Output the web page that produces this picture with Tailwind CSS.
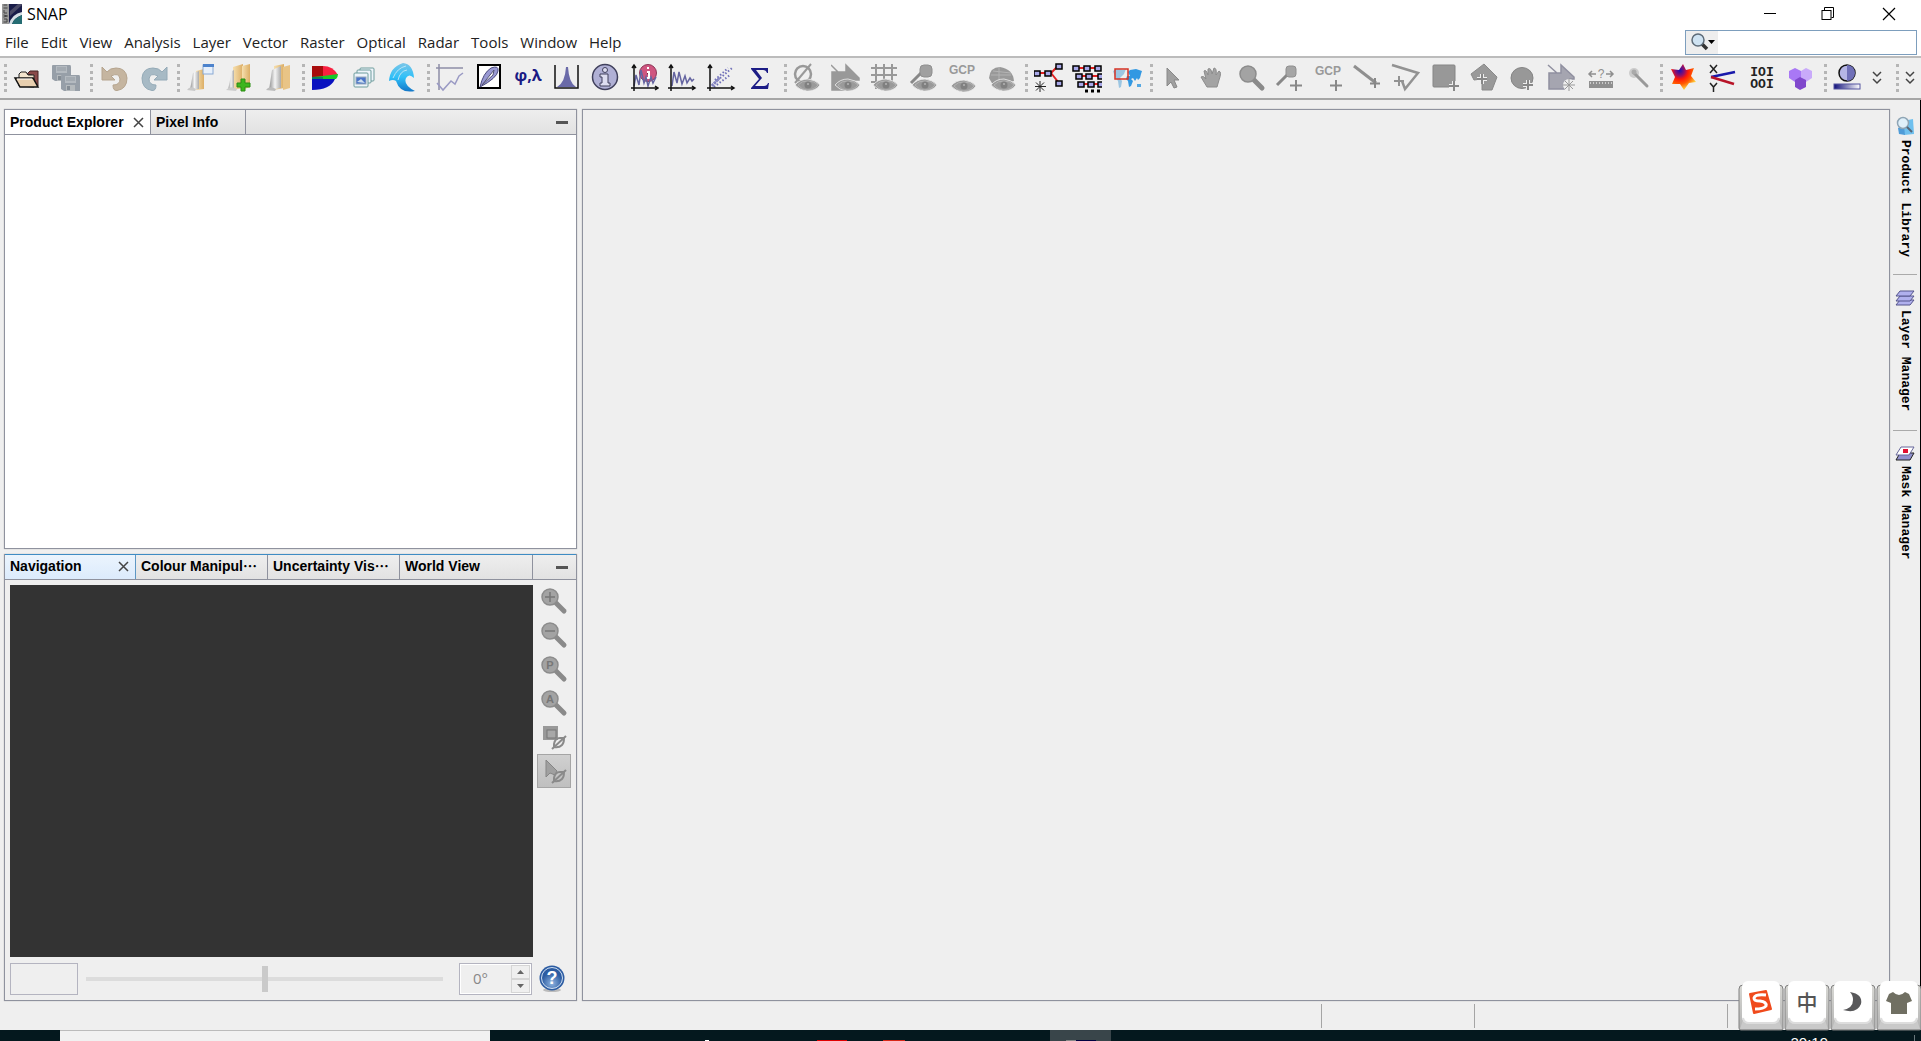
<!DOCTYPE html>
<html lang="en">
<head>
<meta charset="utf-8">
<title>SNAP</title>
<script src="https://cdn.jsdelivr.net/npm/@tailwindcss/browser@4"></script>
</head>
<body class="h-screen overflow-hidden flex flex-col bg-[#efefef] text-black font-['Open_Sans','Noto_Sans',sans-serif] text-[15px]">
<svg class="absolute w-0 h-0" aria-hidden="true">
  <defs>
    <linearGradient id="fold" x1="0" x2="1"><stop offset="0" stop-color="#f6dfae"/><stop offset="1" stop-color="#dcae66"/></linearGradient>
    <linearGradient id="paper" x1="0" x2="1"><stop offset="0" stop-color="#8f8f8f"/><stop offset=".5" stop-color="#f4f4f4"/><stop offset="1" stop-color="#aaa"/></linearGradient>
    <linearGradient id="wave" x1="0" y1="0" x2="0" y2="1"><stop offset="0" stop-color="#7cc6e8"/><stop offset=".5" stop-color="#2fc0f8"/><stop offset="1" stop-color="#1477c8"/></linearGradient>
    <radialGradient id="help" cy=".75"><stop offset="0" stop-color="#8fb4e0"/><stop offset="1" stop-color="#2c5ca2"/></radialGradient>
    <radialGradient id="hot" cx=".35" cy=".25" r=".75"><stop offset="0" stop-color="#1b10b0"/><stop offset=".25" stop-color="#8a1070"/><stop offset=".45" stop-color="#ff1a08"/><stop offset=".7" stop-color="#ff5a00"/><stop offset="1" stop-color="#ffd640"/></radialGradient>
    <linearGradient id="bluebar" x1="0" x2="1"><stop offset="0" stop-color="#10107a"/><stop offset="1" stop-color="#fff"/></linearGradient>
    <linearGradient id="keybody" x1="0" y1="0" x2="0" y2="1"><stop offset="0" stop-color="#d8d8d4"/><stop offset="1" stop-color="#b4b4b4"/></linearGradient>
    <g id="eye"><path d="M3 22Q8 16 16 16Q24 17 28 22Q24 28 15 28Q7 27 3 22Z" fill="#9a9a9a" stroke="#efefef" stroke-width=".8"/><path d="M6 22Q10 17.500 16 18Q23 18 26 22M6 22Q10 27 15 27Q22 27 26 22" fill="none" stroke="#b2b2b2" stroke-width="1"/><circle cx="16" cy="22" r="3.500" fill="#808080"/><circle cx="16" cy="21" r="1" fill="#b5b5b5"/></g>
    <g id="mag"><path d="M16 16L24 24" stroke="#8a8a8a" stroke-width="5" stroke-linecap="round"/><circle cx="10" cy="10" r="8" fill="#a3a3a3" stroke="#8c8c8c" stroke-width="1.500"/></g>
    <g id="key"><path d="M1 9Q1 5 5 5H41Q45 5 45 9V49Q45 50 43 50H3Q1 50 1 48Z" fill="url(#keybody)" stroke="#808080"/><path d="M5 40L2 49H44L41 40Z" fill="#c9c9c9"/><rect x="4" y="1" width="38" height="42" rx="6" fill="#fff"/><path d="M5 38Q6 43 11 43H35Q40 43 41 38" fill="none" stroke="#ddd" stroke-width="2"/></g>
    <g id="node"><rect x="1" y="1" width="6" height="5" fill="#a9a9ea" stroke="#000" stroke-width="1.500"/></g>
  </defs>
</svg>

<header class="bg-white flex flex-col shrink-0">
  <div class="h-7 flex items-center">
    <svg class="ml-0.5 mr-[5px]" width="20" height="20" viewBox="0 0 20 20"><rect width="20" height="20" fill="#191c48"/><rect width="7" height="20" fill="#9b9b9b"/><path d="M1.500 1H5M1.500 4H5.500M2 6V9H5M1.500 11L5.500 12L1.500 13M2 15H5V18H1.500" stroke="#444" fill="none"/><path d="M20 1L8 12V7L16 0H20Z" fill="#4a4a66"/><path d="M7 20Q10 10 20 8V11Q12 14 10 20Z" fill="#d6dfe4"/><path d="M10 20Q12 14 20 11V20Z" fill="#246c72"/></svg>
    <h1 class="text-base">SNAP</h1>
    <div class="ml-auto flex">
      <button class="w-[59px] h-6 grid place-items-center" aria-label="Minimize"><svg width="14" height="14"><path d="M1 6.500H13" stroke="#000"/></svg></button>
      <button class="w-[58px] h-6 grid place-items-center" aria-label="Restore"><svg width="14" height="14" fill="none" stroke="#000"><path d="M3.500 3.500V.5H12.500V10.500H10.500"/><rect x="1" y="3.500" width="9" height="9"/></svg></button>
      <button class="w-16 h-6 grid place-items-center" aria-label="Close"><svg width="14" height="14"><path d="M1 1L13 13M13 1L1 13" stroke="#000" stroke-width="1.200"/></svg></button>
    </div>
  </div>
  <div class="h-7 flex items-center">
    <nav class="flex items-center gap-3 pl-[5px] text-[#222] h-7" aria-label="Menu">
      <button>File</button><button>Edit</button><button>View</button><button>Analysis</button><button>Layer</button><button>Vector</button><button>Raster</button><button>Optical</button><button>Radar</button><button>Tools</button><button>Window</button><button>Help</button>
    </nav>
    <div class="ml-auto mr-1 w-[232px] h-[25px] border border-[#7d9ebd] flex">
      <button class="w-8 bg-[#eee] grid place-items-center" aria-label="Search options"><svg width="26" height="22"><path d="M13 13L18 18" stroke="#333" stroke-width="3.500"/><circle cx="9" cy="9" r="6" fill="#cfe3f2" stroke="#5d6b78" stroke-width="1.500"/><path d="M19 9H26L22.500 13Z"/></svg></button>
      <input type="text" aria-label="Search" class="flex-1 min-w-0 outline-none bg-white px-1">
    </div>
  </div>
</header>

<div role="toolbar" class="shrink-0 h-11 border-y-2 border-t-[#bcbcbc] border-b-[#a6a6a6] flex pl-1 overflow-hidden [&>div]:flex [&>div]:items-center [&>div]:shrink-0 [&_button]:flex-1 [&_button]:h-10 [&_button]:grid [&_button]:place-items-center [&_i]:w-1 [&_i]:h-7 [&_i]:border-l-3 [&_i]:border-dotted [&_i]:border-[#b5b5b5]">
  <div class="w-[86px] pr-[5px]"><i></i>
    <button aria-label="Open"><svg width="30" height="30"><path d="M15 11L18 8H26V23H20V12Z" fill="#8a4a4a" stroke="#422" /><path d="M7 23V11L9 9H14L16 12H22V24Z" fill="#f4e5ce" stroke="#222"/><path d="M3 15H21L26 24H8Z" fill="#e8cfaf" stroke="#111" stroke-width="1.500"/><path d="M5 16H20" stroke="#fff"/></svg></button>
    <button aria-label="Save all"><svg width="30" height="30"><g id="fl"><path d="M1 3Q1 2 2 2H19Q20 2 20 4V18H4L1 16Z" fill="#979fa8"/><rect x="5" y="3" width="11" height="7" fill="#b4bac0"/><path d="M6 5H15M6 7H15" stroke="#929aa2"/><rect x="6" y="12" width="9" height="6" fill="#b5babd"/><rect x="7" y="13" width="3" height="4" fill="#858d95"/></g><use href="#fl" x="9" y="10"/></svg></button>
  </div>
  <div class="w-[87px] pr-[5px]"><i></i>
    <button aria-label="Undo"><svg width="30" height="30"><path d="M3 4V17H16L12 13Q20 9 21 16Q21 22 14 22Q14 28 18 27.500Q28 26 28 15Q27 5 17 5Q11 5 8 9Z" fill="#c5b5a0" stroke="#b5a48e"/></svg></button>
    <button aria-label="Redo"><svg width="30" height="30"><path d="M29 4V17H16L20 13Q12 9 11 16Q11 22 18 22Q18 28 14 27.500Q4 26 4 15Q5 5 15 5Q21 5 24 9Z" fill="#a7bac5" stroke="#94aab7"/></svg></button>
  </div>
  <div class="w-[125px] pr-[5px]"><i></i>
    <button aria-label="Open session"><svg width="30" height="30"><path d="M11 8L19 6V26L11 27Z" fill="url(#fold)"/><path d="M5 27L8 10L14 8V26Z" fill="url(#paper)"/><path d="M2 27Q5 22 11 26L10 28Z" fill="#c9c9c9"/><rect x="18" y="2" width="10" height="9" fill="#e7f0fb" stroke="#8aaad4"/><rect x="18" y="1" width="11" height="3" fill="#4d83cc"/></svg></button>
    <button aria-label="Add session"><svg width="30" height="30"><path d="M9 4L19 1V25L9 27Z" fill="url(#fold)"/><path d="M18 3L26 1V24L18 27Z" fill="url(#fold)"/><path d="M4 27L8 8L10 7V26Z" fill="url(#paper)"/><path d="M2 27Q6 22 13 26L12 28Z" fill="#ccc"/><path d="M17 16H21V20H26V24H21V28H17V24H13V20H17Z" fill="#3db51e" stroke="#2b8d12"/></svg></button>
    <button aria-label="Close session"><svg width="30" height="30"><path d="M11 3L21 1V25L11 27Z" fill="url(#fold)"/><path d="M20 4L27 2V25L20 27Z" fill="#e9c486"/><path d="M6 27L9 7L18 3V25Z" fill="url(#paper)"/><path d="M3 27Q6 22 13 26L12 28Z" fill="#bbb"/></svg></button>
  </div>
  <div class="w-[125px] pr-[5px]"><i></i>
    <button aria-label="RGB image"><svg width="30" height="30"><path d="M2 3H13V14H2Z" fill="#a80c0c"/><path d="M13 3Q23 3 28 12L13 14Z" fill="#f82040"/><path d="M2 14L13 13L28 11Q28 14 26 16H2Z" fill="#19c828"/><path d="M2 14H13V16H2Z" fill="#0a8060"/><path d="M2 16H25Q20 27 2 27Z" fill="#0a12c0"/></svg></button>
    <button aria-label="Image windows"><svg width="30" height="30" fill="#eef4fa" stroke="#6d9c9c"><rect x="11" y="5" width="14" height="13" rx="1"/><rect x="8" y="7" width="14" height="13" rx="1"/><rect x="5" y="10" width="14" height="14" rx="1"/><rect x="7" y="14" width="10" height="7" fill="#4a74c8" stroke="#9ab"/><path d="M8 19L12 16L16 20" fill="#cde" stroke="none"/></svg></button>
    <button aria-label="Wave"><svg width="30" height="30"><path d="M1 18Q2 4 15 0Q25 1 26 15Q21 10 18 15Q15 22 27 28Q12 31 8 18Q5 16 1 18Z" fill="url(#wave)"/><path d="M5 15Q9 5 18 3M10 17Q12 8 19 7" fill="none" stroke="#b8e4f6"/></svg></button>
  </div>
  <div class="w-[357px] pr-[5px]"><i></i>
    <button aria-label="Profile plot"><svg width="30" height="30" fill="none" stroke="#9a9ac4" stroke-width="1.500"><path d="M4 1V27M1 5H28" stroke="#8f8fa8"/><path d="M2 20L8 27L16 18L20 21L24 13L28 10"/></svg></button>
    <button aria-label="Edit mask"><svg width="30" height="30"><rect x="4" y="2" width="22" height="23" fill="#fff" stroke="#000" stroke-width="2"/><path d="M6 24Q9 10 17 5Q25 2 24 8Q23 15 6 24Z" fill="#9999d3" stroke="#4a4a7c"/><path d="M8 22L20 7L19 12Z" fill="#fff" stroke="#557"/></svg></button>
    <button aria-label="Geo-coding"><svg width="30" height="30"><text x="15" y="18" text-anchor="middle" font-family="Open Sans" font-size="16" font-weight="700" fill="#1a1a84">φ,λ</text></svg></button>
    <button aria-label="Histogram"><svg width="30" height="30"><path d="M6 24Q14 20 15 4H17Q18 20 25 24Z" fill="#6a6aa8"/><path d="M4 2V25H27V2" fill="none" stroke="#111" stroke-width="1.500"/></svg></button>
    <button aria-label="Information"><svg width="30" height="30"><circle cx="15" cy="14" r="12.500" fill="#b0b0d5" stroke="#40405c" stroke-width="1.500"/><path d="M12 11H18V20H20V23H10V20H12V14H10V11Z" fill="#ddddf0" stroke="#40405c"/><circle cx="15" cy="7" r="2.500" fill="#ddddf0" stroke="#40405c"/></svg></button>
    <button aria-label="Statistics"><svg width="30" height="30"><circle cx="19" cy="10" r="8.500" fill="#cf5580" stroke="#8d3656"/><path d="M18 9H20V15M17 15H22M18 5H20" stroke="#fff" stroke-width="2"/><path d="M5 23L7 12L10 22L12 7L15 20L17 14L19 23L22 14L24 20L27 14" fill="none" stroke="#6464a0" stroke-width="1.500"/><path d="M5 28V3M2 25H28M3 5L5 2L7 5M26 23L29 25L26 27" fill="none" stroke="#111" stroke-width="1.500"/></svg></button>
    <button aria-label="Spectrum"><svg width="30" height="30" fill="none"><path d="M5 23L7 9L10 20L12 9L15 21L18 13L20 20L23 15L25 18L27 16" stroke="#6464a0" stroke-width="1.500"/><path d="M4 28V3M1 25H27M2 5L4 2L6 5M25 23L28 25L25 27" stroke="#111" stroke-width="1.500"/></svg></button>
    <button aria-label="Scatter plot"><svg width="30" height="30" fill="none"><path d="M6 22L26 5M8 24L24 12M9 17L22 5" stroke="#7070b8" stroke-width="2" stroke-dasharray="1.500 2"/><path d="M6 23L14 14" stroke="#8686c2" stroke-width="3" stroke-dasharray="2 1"/><path d="M4 28V3M1 25H27M2 5L4 2L6 5M25 23L28 25L25 27" stroke="#111" stroke-width="1.500"/></svg></button>
    <button aria-label="Sum"><svg width="30" height="30"><path d="M6 5H23V10H22Q21 7 18 7H11L17 15L10 23H19Q22 23 23 20H24L23 26H6V25L14 16L6 6Z" fill="#1c1c86"/></svg></button>
  </div>
  <div class="w-[241px] pr-1"><i></i>
    <button aria-label="No-data overlay"><svg width="30" height="30"><path d="M3 20L19 1" stroke="#999" stroke-width="2"/><circle cx="11" cy="11" r="8" fill="none" stroke="#999" stroke-width="2.500"/><use href="#eye"/></svg></button>
    <button aria-label="Shape overlay"><svg width="30" height="30"><path d="M0 2L7 9M1 9H15V2L28 15V17H20L14 27H1Z" fill="#999" stroke="#999" stroke-width="1.500"/><use href="#eye" x="1"/></svg></button>
    <button aria-label="Graticule overlay"><svg width="30" height="30"><path d="M6 1V26M14 1V18M22 1V18M1 5H27M1 12H27M1 19H12" stroke="#999" stroke-width="2"/><use href="#eye"/></svg></button>
    <button aria-label="Pin overlay"><svg width="30" height="30"><path d="M2 20L13 9" stroke="#888" stroke-width="3"/><rect x="11" y="2" width="12" height="12" rx="4" fill="#a0a0a0" stroke="#8f8f8f"/><use href="#eye"/></svg></button>
    <button aria-label="GCP overlay"><svg width="30" height="30"><text x="14" y="11" text-anchor="middle" font-family="Liberation Sans" font-size="12" font-weight="700" fill="#999">GCP</text><use href="#eye" y="1"/></svg></button>
    <button aria-label="World overlay"><svg width="30" height="30"><path d="M2 15Q3 4 13 4Q26 6 27 18L6 22Z" fill="#999"/><path d="M4 12H24M12 4V18M6 8L24 10" stroke="#b3b3b3"/><use href="#eye" x="1"/></svg></button>
  </div>
  <div class="w-[125px] pr-1"><i></i>
    <button aria-label="Graph builder"><svg width="30" height="30"><path d="M4 10H17L24 3M17 10L25 20" stroke="#e02020" stroke-width="2" fill="none"/><use href="#node" x="-1" y="7"/><use href="#node" x="10" y="7"/><use href="#node" x="21"/><use href="#node" x="21" y="17"/><path d="M6 18V29M1 23.500H12M2 19.500L10 27.500M10 19.500L2 27.500" stroke="#222"/></svg></button>
    <button aria-label="Batch processing"><svg width="32" height="30"><path d="M3 5H29M8 13H30M9 21H30" stroke="#e02020" stroke-width="2"/><use href="#node" x="0" y="2"/><use href="#node" x="11" y="2"/><use href="#node" x="22" y="2"/><use href="#node" x="3" y="10"/><use href="#node" x="13" y="10"/><path d="M30 11H26V16H30M30 19H26V24H30" stroke="#000" stroke-width="1.500" fill="#a9a9ea"/><use href="#node" x="5" y="18"/><use href="#node" x="15" y="18"/><path d="M13 28H29" stroke="#000" stroke-width="3" stroke-dasharray="3 3"/></svg></button>
    <button aria-label="World map"><svg width="32" height="30"><path d="M2 8Q5 5 12 7L15 6L13 11L9 15L11 18L10 24L8 25L7 18L4 14Z" fill="#9cc6e2"/><path d="M17 9L19 7L25 6L31 8L30 11L29 15L27 17L26 15L24 18L22 15L20 16L22 18L20 23L18 24L17 18L15 16L16 13L19 13Z" fill="#3298e2"/><path d="M26 21L30 21L30 24L26 24Z" fill="#55a8e2"/><rect x="4" y="6" width="13" height="10" fill="none" stroke="#d63324" stroke-width="1.500"/></svg></button>
  </div>
  <div class="w-[510px] pr-px"><i></i>
    <button aria-label="Select"><svg width="30" height="30"><path d="M9 5V23L13 19L16 25L19 24L16 17H21Z" fill="#a0a0a0" stroke="#888"/></svg></button>
    <button aria-label="Pan"><svg width="30" height="30"><path d="M10 24L4 14Q6 12 9 16L7 8Q9 6 11 12L11 6Q14 4 15 11L17 5Q20 5 19 12L22 8Q25 9 22 17L20 24Z" fill="#a3a3a3" stroke="#8c8c8c"/></svg></button>
    <button aria-label="Zoom"><svg width="30" height="30"><use href="#mag" x="2" y="1"/></svg></button>
    <button aria-label="Pin tool"><svg width="30" height="30"><path d="M2 22L13 11" stroke="#888" stroke-width="3"/><rect x="11" y="3" width="10" height="11" rx="3" fill="#a5a5a5" stroke="#8f8f8f"/><path d="M21 17V28M15 22.500H27" stroke="#888" stroke-width="2"/></svg></button>
    <button aria-label="GCP tool"><svg width="30" height="30"><text x="14" y="12" text-anchor="middle" font-family="Liberation Sans" font-size="12" font-weight="700" fill="#999">GCP</text><path d="M22 17V28M16 22.500H28" stroke="#888" stroke-width="2"/></svg></button>
    <button aria-label="Line tool"><svg width="30" height="30"><path d="M1 3L23 20" stroke="#8f8f8f" stroke-width="3"/><path d="M22 15V25M17 20.500H27" stroke="#888" stroke-width="2"/></svg></button>
    <button aria-label="Polyline tool"><svg width="30" height="30" fill="none" stroke="#929292" stroke-width="2"><path d="M1 2L27 10L14 26L11 18" stroke-width="2.500"/><path d="M8 13V23M3 18H13"/></svg></button>
    <button aria-label="Rectangle tool"><svg width="30" height="30"><rect x="3" y="2" width="22" height="22" rx="1" fill="#989898" stroke="#858585"/><path d="M24 18V28M19 23H29" stroke="#efefef" stroke-width="4"/><path d="M24 18V28M19 23H29" stroke="#888" stroke-width="2"/></svg></button>
    <button aria-label="Polygon tool"><svg width="30" height="30"><path d="M2 11L15 1L28 14L23 27H13V16L5 17Z" fill="#999" stroke="#8a8a8a"/><path d="M13 11V21M8 16H18" stroke="#efefef" stroke-width="4"/><path d="M13 11V21M8 16H18" stroke="#888" stroke-width="2"/></svg></button>
    <button aria-label="Ellipse tool"><svg width="30" height="30"><ellipse cx="14" cy="15" rx="11" ry="10.500" fill="#989898" stroke="#858585"/><path d="M20 17V27M15 22H25" stroke="#efefef" stroke-width="4"/><path d="M20 17V27M15 22H25" stroke="#888" stroke-width="2"/></svg></button>
    <button aria-label="Import shape"><svg width="30" height="30"><path d="M1 2L10 10M2 10H14V2L27 14V16H23V26H2Z" fill="#a5a5b0" stroke="#9090a0" stroke-width="1.500"/><circle cx="22" cy="22" r="6" fill="#efefef"/><path d="M22 16V28M16 22H28M18 18L26 26M26 18L18 26" stroke="#999"/></svg></button>
    <button aria-label="Range finder"><svg width="30" height="30"><rect x="3" y="18" width="24" height="7" fill="#8f8f8f"/><path d="M4 20H26" stroke="#ccc" stroke-dasharray="1 2" stroke-width="2"/><path d="M3 11H10M6 8L3 11L6 14M27 11H20M24 8L27 11L24 14" fill="none" stroke="#8f8f8f" stroke-width="1.500"/><text x="15" y="15" text-anchor="middle" font-family="Liberation Sans" font-size="12" fill="#8f8f8f">?</text></svg></button>
    <button aria-label="Magic wand"><svg width="30" height="30"><circle cx="9" cy="10" r="5" fill="#ccc"/><path d="M9 10L22 23" stroke="#999" stroke-width="3" stroke-linecap="round"/><circle cx="9" cy="9" r="2.500" fill="#aaa"/></svg></button>
  </div>
  <div class="w-[164px] pr-1"><i></i>
    <button aria-label="Cluster analysis"><svg width="30" height="30"><path d="M14 1L17 7L25 5L22 13L27 19L20 20L15 27L11 21L3 21L6 14L2 6L10 7Z" fill="url(#hot)"/></svg></button>
    <button aria-label="XY tool"><svg width="30" height="30"><path d="M3 14L27 9" stroke="#1919aa" stroke-width="2.500"/><path d="M3 14L26 21" stroke="#b81428" stroke-width="2.500"/><path d="M2 2L9 10M9 2L2 10M2 20L5.500 24L9 20M5.500 24V29" stroke="#222" stroke-width="1.500" fill="none"/></svg></button>
    <button aria-label="Binary"><svg width="30" height="30"><g font-family="Liberation Mono" font-size="13" font-weight="700" fill="#222" text-anchor="middle"><text x="15" y="13">IOI</text><text x="15" y="25">OOI</text></g></svg></button>
    <button aria-label="Hexagons"><svg width="30" height="30"><path d="M9 5L15 8V15L9 19L3 15V8Z" fill="#a978f5"/><path d="M20 5L26 8V15L20 19L15 15V8Z" fill="#c9aafa"/><path d="M14 14L20 17V24L14 27L9 24V17Z" fill="#8048cc"/></svg></button>
  </div>
  <div class="w-[72px] pr-[7px]"><i></i>
    <button aria-label="Contrast"><svg width="30" height="30"><circle cx="15" cy="10" r="8" fill="#b5b5e5" stroke="#111" stroke-width="1.500"/><path d="M15 2A8 8 0 0 1 15 18Z" fill="#7070b8"/><rect x="2" y="21" width="26" height="5" fill="url(#bluebar)" stroke="#5555a0"/></svg></button>
    <button class="max-w-6" aria-label="More tools"><svg width="10" height="14" fill="none" stroke="#444" stroke-width="1.500"><path d="M1 1L5 5L9 1M1 8L5 12L9 8"/></svg></button>
  </div>
  <div class="w-7 pr-1"><i></i>
    <button aria-label="More toolbars"><svg width="10" height="14" fill="none" stroke="#444" stroke-width="1.500"><path d="M1 1L5 5L9 1M1 8L5 12L9 8"/></svg></button>
  </div>
</div>

<main class="flex-1 min-h-0 flex gap-[5px] pt-[9px] pb-px pl-1">
  <div class="w-[573px] shrink-0 flex flex-col gap-[5px] text-[14px] font-bold font-['Liberation_Sans',sans-serif]">
    <section class="flex-[439] flex flex-col border border-[#8f929e] bg-white shadow-[0_0_1px_#aaa]">
      <div class="h-[25px] shrink-0 flex border-b border-[#8f929e] bg-linear-to-b from-[#eee] to-[#e2e2e2]" role="tablist">
        <button role="tab" class="w-[146px] bg-white border-r border-[#8f929e] flex items-center justify-between pl-[5px] pr-1.5 whitespace-nowrap">Product Explorer<svg width="11" height="11"><path d="M1 1L10 10M10 1L1 10" stroke="#444" stroke-width="1.500"/></svg></button>
        <button role="tab" class="w-[95px] border-r border-[#8f929e] text-left pl-[5px]">Pixel Info</button>
        <button class="ml-auto pr-2" aria-label="Minimize panel"><svg width="12" height="4"><rect width="12" height="3" y="1" fill="#555"/></svg></button>
      </div>
    </section>
    <section class="flex-[447] min-h-0 flex flex-col border border-[#8f929e] shadow-[0_0_1px_#aaa]">
      <div class="h-[25px] shrink-0 flex border-b border-[#8f929e] bg-linear-to-b from-[#eee] to-[#e2e2e2] shadow-[0_-1px_0_#3e8cc4]" role="tablist">
        <button role="tab" class="w-[131px] bg-linear-to-b from-[#ebf4fd] to-[#dcebfc] border-r border-[#5d97c4] flex items-center justify-between pl-[5px] pr-1.5">Navigation<svg width="11" height="11"><path d="M1 1L10 10M10 1L1 10" stroke="#444" stroke-width="1.500"/></svg></button>
        <button role="tab" class="w-[132px] border-r border-[#8f929e] text-left pl-[5px] whitespace-nowrap">Colour Manipul<span class="font-['Noto_Sans_CJK_SC',sans-serif] leading-none" lang="zh-CN">…</span></button>
        <button role="tab" class="w-[132px] border-r border-[#8f929e] text-left pl-[5px] whitespace-nowrap">Uncertainty Vis<span class="font-['Noto_Sans_CJK_SC',sans-serif] leading-none" lang="zh-CN">…</span></button>
        <button role="tab" class="w-[133px] border-r border-[#8f929e] text-left pl-[5px]">World View</button>
        <button class="ml-auto pr-2" aria-label="Minimize panel"><svg width="12" height="4"><rect width="12" height="3" y="1" fill="#555"/></svg></button>
      </div>
      <div class="flex-1 min-h-0 flex pl-[5px]">
        <div class="flex-1 bg-[#333] mt-[5px]"></div>
        <div class="w-[43px] shrink-0 flex flex-col items-center pt-1 pr-px [&_button]:w-[34px] [&_button]:h-[34px] [&_button]:grid [&_button]:place-items-center">
          <button aria-label="Zoom in"><svg width="28" height="28"><use href="#mag"/><path d="M10 5V15M5 10H15" stroke="#777" stroke-width="1.500"/></svg></button>
          <button aria-label="Zoom out"><svg width="28" height="28"><use href="#mag"/><path d="M5 10H15" stroke="#777" stroke-width="1.500"/></svg></button>
          <button aria-label="Zoom to pixel"><svg width="28" height="28"><use href="#mag"/><text x="10" y="14" text-anchor="middle" font-size="11" fill="#777">P</text></svg></button>
          <button aria-label="Zoom all"><svg width="28" height="28"><use href="#mag"/><text x="10" y="14" text-anchor="middle" font-size="11" fill="#777">A</text></svg></button>
          <button aria-label="Synchronise views"><svg width="28" height="28"><rect x="3" y="3" width="15" height="14" fill="#999"/><rect x="7" y="7" width="9" height="8" fill="#a8a8a8" stroke="#777"/><g id="chain" fill="none" stroke="#8a8a8a" stroke-width="2"><path d="M12 26L26 13"/><path d="M14 21Q15 15 20 15H24Q24 20 22 22Q19 25 14 24Z"/></g></svg></button>
          <button class="border border-[#a5a5a5] bg-linear-to-b from-[#d0d0d0] to-[#bfbfbf]" aria-label="Synchronise cursors"><svg width="28" height="28"><path d="M6 3V20L10 16L15 18L17 14Z" fill="#a0a0a0" stroke="#858585"/><use href="#chain"/></svg></button>
        </div>
      </div>
      <div class="h-[43px] shrink-0 flex items-center pl-[5px] font-normal">
        <input type="text" aria-label="Zoom factor" disabled class="w-[68px] h-8 border border-[#b4b4c0] bg-[#efefef]">
        <input type="range" aria-label="Zoom" disabled value="50" class="ml-2 w-[357px] h-7 appearance-none bg-transparent [&::-webkit-slider-runnable-track]:h-1 [&::-webkit-slider-runnable-track]:bg-[#dcdcdc] [&::-webkit-slider-thumb]:appearance-none [&::-webkit-slider-thumb]:w-1.5 [&::-webkit-slider-thumb]:h-[26px] [&::-webkit-slider-thumb]:-mt-[11px] [&::-webkit-slider-thumb]:bg-[#cacaca]">
        <div class="ml-4 w-[73px] h-8 border border-[#b4b4c0] bg-white flex p-px">
          <input type="text" aria-label="Rotation" disabled value="0°" class="w-[50px] bg-[#efefef] pl-3 text-[#888] text-[15px] font-['Open_Sans',sans-serif]">
          <div class="flex-1 flex flex-col bg-[#efefef]">
            <button class="flex-1 border border-[#d5d5d5] grid place-items-center" aria-label="Increase"><svg width="7" height="4"><path d="M3.500 0L7 4H0Z" fill="#666"/></svg></button>
            <button class="flex-1 border border-[#d5d5d5] grid place-items-center" aria-label="Decrease"><svg width="7" height="4"><path d="M3.500 4L7 0H0Z" fill="#666"/></svg></button>
          </div>
        </div>
        <button class="ml-1.5" aria-label="Help"><svg width="28" height="28"><ellipse cx="14" cy="25" rx="9" ry="2" fill="#bbb"/><circle cx="14" cy="13" r="12.500" fill="#2c5ca2"/><circle cx="14" cy="13" r="10.500" fill="url(#help)" stroke="#cfdff2"/><text x="14" y="19" text-anchor="middle" font-size="18" font-weight="700" fill="#fff">?</text></svg></button>
      </div>
    </section>
  </div>
  <section class="flex-1 border border-[#8f929e] shadow-[0_0_1px_#aaa]" aria-label="Workspace"></section>
  <aside class="-ml-[5px] w-[31px] shrink-0 border-r border-black -mt-[9px] pt-4 flex flex-col items-center text-[13px] leading-4 font-bold font-['Liberation_Mono',monospace] [&>button]:flex [&>button]:flex-col [&>button]:items-center [&>button]:gap-1 [&_span]:[writing-mode:vertical-rl] [&>hr]:w-6 [&>hr]:border-[#aaa]">
    <button class="h-[158px]"><svg width="20" height="20"><path d="M8 5L18 3L19 18L9 19Z" fill="#6fc0ee"/><path d="M3 12L9 10L10 19L4 18Z" fill="#4f9cd8"/><circle cx="8" cy="7" r="5.500" fill="#dff0fa" stroke="#8fa5b5" stroke-width="1.500"/><path d="M12 11L17 16" stroke="#567" stroke-width="2"/></svg><span>Product Library</span></button>
    <hr>
    <button class="h-[155px] pt-[15px]"><svg width="20" height="16" fill="#b0b0ee" stroke="#55558c"><path d="M5 10H19L15 15H1Z"/><path d="M5 6H19L15 11H1Z"/><path d="M5 1H19L15 6H1Z"/></svg><span>Layer Manager</span></button>
    <hr>
    <button class="pt-[15px]"><svg width="20" height="16"><path d="M5 7H19L15 14H1Z" fill="#9090cc" stroke="#222"/><path d="M6 1H19L14 9H1Z" fill="#fff" stroke="#66669a"/><rect x="8" y="3" width="5" height="4" fill="#e01030"/></svg><span>Mask Manager</span></button>
  </aside>
</main>

<footer class="shrink-0">
  <div class="h-7 flex justify-end items-center pr-[193px] [&>div]:h-6 [&>div]:border-l [&>div]:border-[#a5a5a5]"><div class="w-[153px]"></div><div class="w-[253px]"></div><div></div></div>
  <div class="h-[11px] overflow-hidden bg-[#04181e] flex items-start">
    <div class="ml-[60px] w-[430px] h-full bg-[#f1f1f1] border-t border-[#bbb]"></div>
    <div class="ml-[215px] mt-2.5 w-1 h-px bg-white"></div>
    <div class="ml-[108px] mt-2.5 w-[30px] h-px bg-[#e00000]"></div>
    <div class="ml-9 mt-2.5 w-[22px] h-px bg-[#d82818]"></div>
    <div class="ml-[145px] w-[61px] h-full bg-[#39454a] pt-2.5 pl-4 flex"><div class="w-2.5 h-px bg-[#888]"></div><div class="w-5 h-px bg-[#000040]"></div></div>
    <time class="ml-auto mt-[5px] text-[15px] leading-4 text-white font-['Liberation_Sans',sans-serif] pr-[86px] mr-1.5 border-r border-[#6a777c]">20:19</time>
  </div>
</footer>

<div class="absolute bottom-[10px] right-0 flex" aria-label="Input method">
  <button aria-label="Sogou"><svg width="46" height="51"><use href="#key"/><path d="M12 14L28 11L33 29L16 33Z" fill="#f04a1c" stroke="#f04a1c" stroke-width="2" stroke-linejoin="round"/><path d="M28 15Q17 14 16 18Q16 21 22 21Q29 22 28 26Q26 29 17 29" fill="none" stroke="#fff" stroke-width="3"/></svg></button>
  <button aria-label="Chinese input"><svg width="46" height="51"><use href="#key"/><text x="23" y="30" text-anchor="middle" font-family="Noto Sans CJK SC" font-size="21" font-weight="500" fill="#555">中</text></svg></button>
  <button aria-label="Half width"><svg width="46" height="51"><use href="#key"/><path d="M20 12Q33 14 31 24Q27 34 13 30Q23 28 23 20Q23 15 20 12Z" fill="#58585a"/></svg></button>
  <button aria-label="Skin"><svg width="45" height="51"><use href="#key"/><path d="M17 12Q23 18 29 12L33 14L36 21L31 23V34H15V23L10 21L13 14Z" fill="#706f62"/></svg></button>
</div>
</body>
</html>
